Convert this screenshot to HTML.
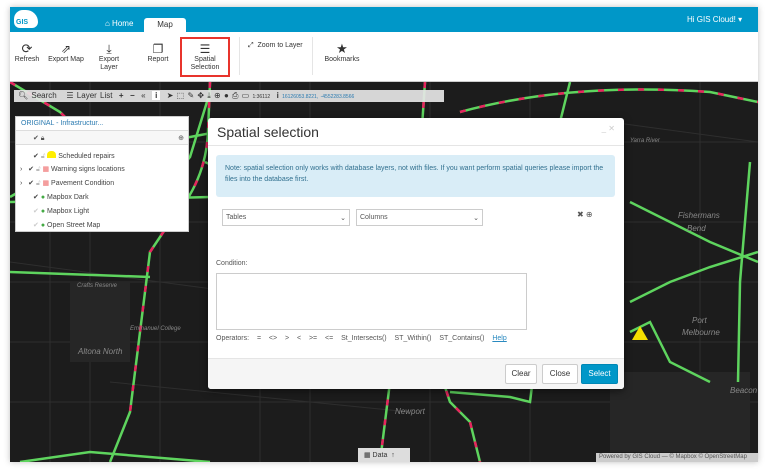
<!DOCTYPE html>
<html><head><style>
*{box-sizing:border-box;margin:0;padding:0}
body{width:768px;height:475px;background:#fff;font-family:"Liberation Sans",sans-serif;position:relative;overflow:hidden}
.abs{position:absolute}
#app{left:10px;top:7px;width:748px;height:455px;box-shadow:0 0 6px rgba(0,0,0,.25);overflow:hidden}
#hdr{left:0;top:0;width:748px;height:25px;background:#0097c8}
#rib{left:0;top:25px;width:748px;height:50px;background:#fff;border-bottom:1px solid #ccc}
#map{left:0;top:75px;width:748px;height:380px;background:#1c1c1c}
.rb{position:absolute;font-size:7px;color:#333;text-align:center;line-height:8px}
.tb{font-size:8px;color:#333}
.lay{font-size:7px;color:#444;position:absolute}
.btn{position:absolute;top:364px;height:20px;border:1px solid #ccc;background:#fff;font-size:8px;color:#333;text-align:center;line-height:18px;border-radius:2px}
</style></head><body>
<div id="app" class="abs">
<div id="map" class="abs">
<svg width="748" height="380" viewBox="0 0 748 380" style="position:absolute;left:0;top:0">
<g stroke="#2e2e2e" stroke-width="1" fill="none">
<path d="M0 60 H748 M0 140 H748 M0 200 H748 M0 260 H748 M0 320 H748 M80 0 V380 M150 0 V380 M300 0 V380 M420 0 V380 M520 0 V380 M690 0 V380 M40 0 V380 M250 0 V380"/>
<path d="M0 180 L300 220 M100 300 L400 330 M600 40 L748 60"/>
</g>
<g fill="#262626"><rect x="600" y="290" width="140" height="80"/><rect x="60" y="200" width="60" height="80"/></g>
<g stroke="#5ed45e" stroke-width="2.5" fill="none">
<path d="M0 115 Q60 80 100 70 L260 40"/>
<path d="M0 120 L200 115 L400 110"/>
<path d="M200 0 L198 50 Q196 100 160 140 L140 170 L130 250 L120 330 L100 380"/>
<path d="M195 80 L260 110 L330 125 L400 130"/>
<path d="M0 190 L140 195"/>
<path d="M200 10 L180 75 L150 110"/>
<path d="M415 0 L405 150 L380 300 L370 380"/>
<path d="M450 30 Q560 0 700 10 L748 20"/>
<path d="M560 0 L550 40"/>
<path d="M620 120 L640 130 L700 160 L748 180"/>
<path d="M620 220 L660 200 L700 185 L748 170"/>
<path d="M620 250 L640 240 L660 280 L700 300"/>
<path d="M740 80 L730 200 L728 300"/>
<path d="M10 380 L80 370 L200 380"/>
<path d="M430 290 L440 320 L460 340 L470 380"/>
<path d="M440 310 L500 315 L520 320 L525 280"/>
<path d="M0 0 L50 30 L80 60"/>
</g>
<g stroke="#e8245e" stroke-width="2.5" fill="none" stroke-dasharray="6 14">
<path d="M415 0 L405 150 L380 300 L370 380"/>
<path d="M200 0 L198 50 Q196 100 160 140 L140 170 L130 250 L120 330"/>
<path d="M450 30 Q560 0 700 10 L748 20"/>
<path d="M430 290 L440 320 L460 340 L470 380"/>
<path d="M0 0 L50 30 L80 60"/>
</g>
<polygon points="622,258 630,244 638,258" fill="#f5e000"/>
<g font-size="6" font-style="italic" fill="#888" font-family="Liberation Sans"><text x="67" y="205">Crafts Reserve</text><text x="120" y="248">Emmanuel College</text><text x="68" y="272" font-size="8">Altona North</text><text x="234" y="226">Paisley Park</text><text x="302" y="234">Loft Reserve</text><text x="668" y="136" font-size="8">Fishermans</text><text x="677" y="149" font-size="8">Bend</text><text x="682" y="241" font-size="8">Port</text><text x="672" y="253" font-size="8">Melbourne</text><text x="720" y="311" font-size="8">Beacon</text><text x="385" y="332" font-size="8">Newport</text><text x="620" y="60">Yarra River</text></g>
</svg>
<div class="abs" style="left:4px;top:8px;width:430px;height:12px;background:rgba(230,230,230,.92)"></div>
<div class="abs tb" style="left:8px;top:9px;word-spacing:1px;white-space:nowrap">&#x1F50D;&#xFE0E; Search &nbsp; ☰ Layer List &nbsp;<b>+</b>&nbsp; <b>−</b> &nbsp;« &nbsp;<span style="background:#fff;padding:0 3px"><b>i</b></span>&nbsp; ➤ ⬚ ✎ ✥ ⤓ ⊕ ● ⎙ ▭ <span style="font-size:5px">1:36112</span> &nbsp;<b>i</b> <span style="font-size:5px;color:#2a7ab0">16126053.8221, -4552283.8566</span></div>
<div class="abs" style="left:5px;top:34px;width:174px;height:116px;background:#fff;border:1px solid #ccc">
<div style="height:14px;border-bottom:1px solid #ddd;font-size:7px;color:#2a7ab0;padding:3px 5px">ORIGINAL - Infrastructur...</div>
<div style="height:14px;border-bottom:1px solid #ddd;background:#f7f7f7;font-size:7px;color:#555;padding:3px 0 0 17px">✔ 🔒︎<span style="float:right;margin-right:4px">⊕</span></div>
<div class="lay" style="left:17px;top:34px">✔ <span style="color:#bbb">🔓︎</span> <span style="display:inline-block;width:9px;height:7px;background:#ffee00;border-radius:4px 4px 0 0"></span> Scheduled repairs</div>
<div class="lay" style="left:4px;top:48px">›&nbsp;&nbsp; ✔ <span style="color:#bbb">🔓︎</span> <span style="color:#e66">▦</span> Warning signs locations</div>
<div class="lay" style="left:4px;top:62px">›&nbsp;&nbsp; ✔ <span style="color:#bbb">🔓︎</span> <span style="color:#e66">▦</span> Pavement Condition</div>
<div class="lay" style="left:17px;top:76px">✔ <span style="color:#4a4">●</span> Mapbox Dark</div>
<div class="lay" style="left:17px;top:90px"><span style="color:#ccc">✔</span> <span style="color:#4a4">●</span> Mapbox Light</div>
<div class="lay" style="left:17px;top:104px"><span style="color:#ccc">✔</span> <span style="color:#4a4">●</span> Open Street Map</div>
</div>
<div class="abs" style="left:348px;top:366px;width:52px;height:14px;background:#ddd;font-size:7px;color:#333;padding:3px 6px">▦ Data &nbsp;↑</div>
<div class="abs" style="left:586px;top:371px;width:162px;height:9px;background:#ccc;font-size:6px;color:#555;padding:1px 3px;white-space:nowrap">Powered by GIS Cloud — © Mapbox © OpenStreetMap</div>
</div>
<div id="hdr" class="abs">
<div class="abs" style="left:4px;top:3px;width:24px;height:18px;background:#fff;border-radius:9px 12px 6px 6px"></div>
<div class="abs" style="left:6px;top:12px;font-size:7px;font-weight:bold;color:#0097c8">GIS</div>
<div class="abs" style="left:95px;top:12px;font-size:8px;color:#fff">⌂ Home</div>
<div class="abs" style="left:134px;top:11px;width:42px;height:14px;background:#fff;border-radius:3px 3px 0 0;font-size:8px;color:#333;text-align:center;line-height:13px">Map</div>
<div class="abs" style="left:677px;top:8px;font-size:8px;color:#fff">Hi GIS Cloud! ▾</div>
</div>
<div id="rib" class="abs">
<div class="rb" style="left:2px;top:10px;width:30px"><div style="font-size:13px;line-height:14px">⟳</div>Refresh</div>
<div class="rb" style="left:38px;top:10px;width:36px"><div style="font-size:12px;line-height:14px">⇗</div>Export Map</div>
<div class="rb" style="left:84px;top:10px;width:30px"><div style="font-size:12px;line-height:14px">⤓</div>Export<br>Layer</div>
<div class="rb" style="left:133px;top:10px;width:30px"><div style="font-size:12px;line-height:14px">❐</div>Report</div>
<div class="abs" style="left:170px;top:5px;width:50px;height:40px;border:2px solid #e8342c"></div>
<div class="rb" style="left:172px;top:10px;width:46px"><div style="font-size:12px;line-height:14px">☰</div>Spatial<br>Selection</div>
<div class="abs" style="left:229px;top:5px;width:1px;height:38px;background:#e5e5e5"></div>
<div class="rb" style="left:238px;top:10px;width:60px;text-align:left">⤢ &nbsp;Zoom to Layer</div>
<div class="abs" style="left:302px;top:5px;width:1px;height:38px;background:#e5e5e5"></div>
<div class="rb" style="left:312px;top:10px;width:40px"><div style="font-size:13px;line-height:14px">★</div>Bookmarks</div>
</div>
</div>
<div class="abs" style="left:208px;top:118px;width:416px;height:271px;background:#fff;border-radius:3px;box-shadow:0 2px 8px rgba(0,0,0,.5)">
<div style="height:28px;border-bottom:1px solid #e5e5e5;font-size:14px;color:#333;padding:6px 9px">Spatial selection<span style="float:right;font-size:8px;color:#ccc">_ ✕</span></div>
<div class="abs" style="left:8px;top:37px;width:399px;height:42px;background:#d9edf7;border-radius:3px;font-size:7px;color:#31708f;padding:8px 9px;line-height:11px">Note: spatial selection only works with database layers, not with files. If you want perform spatial queries please import the files into the database first.</div>
<div class="abs" style="left:14px;top:91px;width:128px;height:17px;border:1px solid #ccc;font-size:7px;color:#555;padding:4px 3px">Tables<span style="float:right">⌄</span></div>
<div class="abs" style="left:148px;top:91px;width:127px;height:17px;border:1px solid #ccc;font-size:7px;color:#555;padding:4px 3px">Columns<span style="float:right">⌄</span></div>
<div class="abs" style="left:369px;top:92px;font-size:8px;color:#555">✖ ⊕</div>
<div class="abs" style="left:8px;top:142px;font-size:7px;color:#555">Condition:</div>
<div class="abs" style="left:8px;top:155px;width:311px;height:57px;border:1px solid #ccc"></div>
<div class="abs" style="left:8px;top:217px;font-size:7px;color:#555;word-spacing:2px;white-space:nowrap">Operators: &nbsp;= &nbsp;&lt;&gt; &nbsp;&gt; &nbsp;&lt; &nbsp;&gt;= &nbsp;&lt;= &nbsp;St_Intersects() &nbsp;ST_Within() &nbsp;ST_Contains() &nbsp;<span style="color:#2a8ac0;text-decoration:underline">Help</span></div>
<div class="abs" style="left:0;top:240px;width:416px;height:31px;background:#f5f5f5;border-top:1px solid #e5e5e5;border-radius:0 0 3px 3px"></div>
</div>
<div class="btn" style="left:505px;width:32px">Clear</div>
<div class="btn" style="left:542px;width:36px">Close</div>
<div class="btn" style="left:581px;width:37px;background:#0097c8;border-color:#0087b5;color:#fff">Select</div>
</body></html>
